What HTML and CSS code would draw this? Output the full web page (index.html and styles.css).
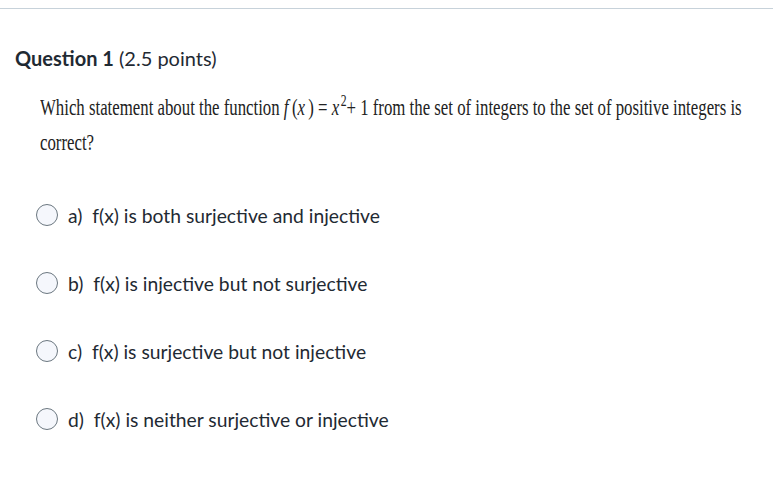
FILE: index.html
```html
<!DOCTYPE html>
<html>
<head>
<meta charset="utf-8">
<link rel="stylesheet" href="styles.css">
</head>
<body>
<div class="page">
  <div class="rule"></div>
  <h2 class="qhead"><b>Question 1</b> <span class="pts">(2.5 points)</span></h2>
  <div class="qtext">
    <div class="qline">Which statement about the function <i class="mi">f</i>&thinsp;(<i class="mi">x</i>&thinsp;) = <i class="mi">x</i><sup>2</sup>+ 1 from the set of integers to the set of positive integers is</div>
    <div class="qline">correct?</div>
  </div>
  <div class="options">
    <label class="opt"><span class="radio"></span><span class="lbl">a)&nbsp; f(x) is both surjective and injective</span></label>
    <label class="opt"><span class="radio"></span><span class="lbl">b)&nbsp; f(x) is injective but not surjective</span></label>
    <label class="opt"><span class="radio"></span><span class="lbl">c)&nbsp; f(x) is surjective but not injective</span></label>
    <label class="opt"><span class="radio"></span><span class="lbl">d)&nbsp; f(x) is neither surjective or injective</span></label>
  </div>
</div>
</body>
</html>
```
FILE: styles.css
```css
html, body {
  margin: 0;
  padding: 0;
  background: #ffffff;
}
.page {
  width: 774px;
  height: 477px;
  overflow: hidden;
  font-family: Lato, "Liberation Sans", sans-serif;
  color: #2d3b45;
}
.rule {
  margin-top: 8px;
  border-top: 1px solid #c7d2da;
  margin-right: 1px;
}
.qhead {
  margin: 36px 0 0 15px;
  font-size: 20px;
  line-height: 26px;
  font-weight: 400;
  color: #1f2a33;
}
.qhead b {
  font-weight: 700;
}
.pts {
  font-weight: 400;
}
.qtext {
  margin: 19px 0 0 40px;
  font-family: "Liberation Serif", serif;
  font-size: 23px;
  color: #222;
  transform: scaleX(0.73);
  transform-origin: left top;
  width: 1000px;
}
.qline {
  line-height: 35px;
  white-space: nowrap;
}
.mi {
  font-style: italic;
}
sup {
  font-size: 16px;
  line-height: 0;
  vertical-align: 9px;
  margin-left: 2px;
}
.options {
  display: flex;
  flex-direction: column;
  gap: 40px;
  margin: 41px 0 0 36px;
}
.opt {
  display: flex;
  align-items: center;
  gap: 10px;
  height: 28px;
}
.radio {
  width: 20px;
  height: 20px;
  border: 1px solid #6b7780;
  border-radius: 50%;
  background: #f5f7fc;
  flex: none;
}
.lbl {
  font-size: 19.3px;
  color: #1f2a33;
}
```
